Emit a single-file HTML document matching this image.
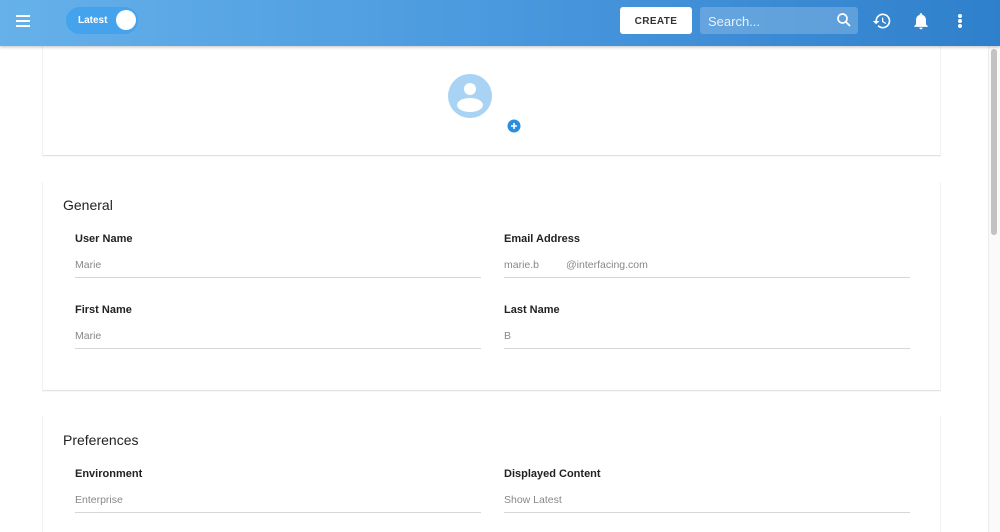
<!DOCTYPE html>
<html><head><style>
*{margin:0;padding:0;box-sizing:border-box}
html,body{width:1000px;height:532px;overflow:hidden}
body{background:#fff;font-family:"Liberation Sans",sans-serif;position:relative}
.hdr{position:absolute;left:0;top:0;width:1000px;height:46px;background:linear-gradient(90deg,#66b1ea 0%,#4a98de 50%,#2f80cc 100%);box-shadow:0 1px 3px rgba(0,0,0,.25);z-index:2}
.a{position:absolute}
.card{position:absolute;left:42px;width:899px;background:#fff;border-left:1px solid #f2f2f2;border-right:1px solid #f2f2f2;border-bottom:1px solid #e2e2e2;box-shadow:0 1px 1px rgba(0,0,0,.04)}
.h{position:absolute;left:20px;font-size:14px;color:#222}
.lab{position:absolute;font-size:11px;font-weight:bold;color:#222}
.val{position:absolute;font-size:10.5px;color:#888}
.line{position:absolute;height:1px;background:#d6d6d6;width:406px}
</style></head><body>
<div class="hdr">
 <div class="a" style="left:16px;top:15px;width:14px;height:2px;background:#fff"></div>
 <div class="a" style="left:16px;top:20px;width:14px;height:2px;background:#fff"></div>
 <div class="a" style="left:16px;top:25px;width:14px;height:2px;background:#fff"></div>
 <div class="a" style="left:66px;top:7px;width:72px;height:27px;border-radius:14px;background:#45a2ec"></div>
 <div class="a" style="left:78px;top:15px;font-size:10px;font-weight:bold;color:#fff">Latest</div>
 <div class="a" style="left:116px;top:10px;width:20px;height:20px;border-radius:50%;background:#fff"></div>
 <div class="a" style="left:620px;top:7px;width:72px;height:27px;border-radius:3px;background:#fff;color:#333;font-size:10px;font-weight:bold;text-align:center;line-height:29px;letter-spacing:.4px">CREATE</div>
 <div class="a" style="left:700px;top:7px;width:158px;height:27px;border-radius:3px;background:rgba(255,255,255,.2)"></div>
 <div class="a" style="left:708px;top:14px;font-size:13px;color:rgba(255,255,255,.85)">Search...</div>
 <svg class="a" style="left:835px;top:11px" width="18" height="18" viewBox="0 0 24 24"><circle cx="10" cy="10" r="6" fill="none" stroke="#fff" stroke-width="2.2"/><path d="M14.5 14.5L20 20" stroke="#fff" stroke-width="2.4"/></svg>
 <svg class="a" style="left:872px;top:11px" width="20" height="20" viewBox="0 0 24 24"><path fill="#fff" d="M13 3a9 9 0 0 0-9 9H1l3.9 3.9L9 12H6a7 7 0 1 1 2.05 4.95l-1.42 1.42A9 9 0 1 0 13 3zm-1 5v5l4.28 2.54.72-1.21-3.5-2.08V8H12z"/></svg>
 <svg class="a" style="left:911px;top:11px" width="20" height="20" viewBox="0 0 24 24"><path fill="#fff" d="M12 22c1.1 0 2-.9 2-2h-4a2 2 0 0 0 2 2zm6-6v-5c0-3.07-1.64-5.64-4.5-6.32V4a1.5 1.5 0 0 0-3 0v.68C7.63 5.36 6 7.92 6 11v5l-2 2v1h16v-1l-2-2z"/></svg>
 <div class="a" style="left:958px;top:14px;width:4px;height:4px;border-radius:50%;background:#fff"></div>
 <div class="a" style="left:958px;top:19px;width:4px;height:4px;border-radius:50%;background:#fff"></div>
 <div class="a" style="left:958px;top:24px;width:4px;height:4px;border-radius:50%;background:#fff"></div>
</div>
<div class="card" style="top:46px;height:110px">
 <svg class="a" style="left:405px;top:28px" width="44" height="44" viewBox="0 0 44 44"><circle cx="22" cy="22" r="22" fill="#a8d3f5"/><circle cx="22" cy="15" r="6" fill="#fff"/><ellipse cx="22" cy="31" rx="13" ry="7" fill="#fff"/></svg>
 <svg class="a" style="left:464px;top:73px" width="14" height="14" viewBox="0 0 14 14"><circle cx="7" cy="7" r="6.5" fill="#2a8ee0"/><path d="M7 4v6M4 7h6" stroke="#fff" stroke-width="1.6"/></svg>
</div>
<div class="card" style="top:182px;height:209px">
 <div class="h" style="top:15px">General</div>
 <div class="lab" style="left:32px;top:51px">User Name</div>
 <div class="val" style="left:32px;top:77px">Marie</div>
 <div class="line" style="left:32px;top:95px"></div>
 <div class="lab" style="left:461px;top:51px">Email Address</div>
 <div class="val" style="left:461px;top:77px">marie.b<span style="display:inline-block;width:27px"></span>@interfacing.com</div>
 <div class="line" style="left:461px;top:95px"></div>
 <div class="lab" style="left:32px;top:122px">First Name</div>
 <div class="val" style="left:32px;top:148px">Marie</div>
 <div class="line" style="left:32px;top:166px"></div>
 <div class="lab" style="left:461px;top:122px">Last Name</div>
 <div class="val" style="left:461px;top:148px">B</div>
 <div class="line" style="left:461px;top:166px"></div>
</div>
<div class="card" style="top:416px;height:130px">
 <div class="h" style="top:16px">Preferences</div>
 <div class="lab" style="left:32px;top:52px">Environment</div>
 <div class="val" style="left:32px;top:78px">Enterprise</div>
 <div class="line" style="left:32px;top:96px"></div>
 <div class="lab" style="left:461px;top:52px">Displayed Content</div>
 <div class="val" style="left:461px;top:78px">Show Latest</div>
 <div class="line" style="left:461px;top:96px"></div>
</div>
<div class="a" style="left:988px;top:46px;width:12px;height:486px;background:#fafafa;border-left:1px solid #ececec"></div>
<div class="a" style="left:991px;top:49px;width:6px;height:186px;border-radius:3px;background:#c2c2c2"></div>
</body></html>
